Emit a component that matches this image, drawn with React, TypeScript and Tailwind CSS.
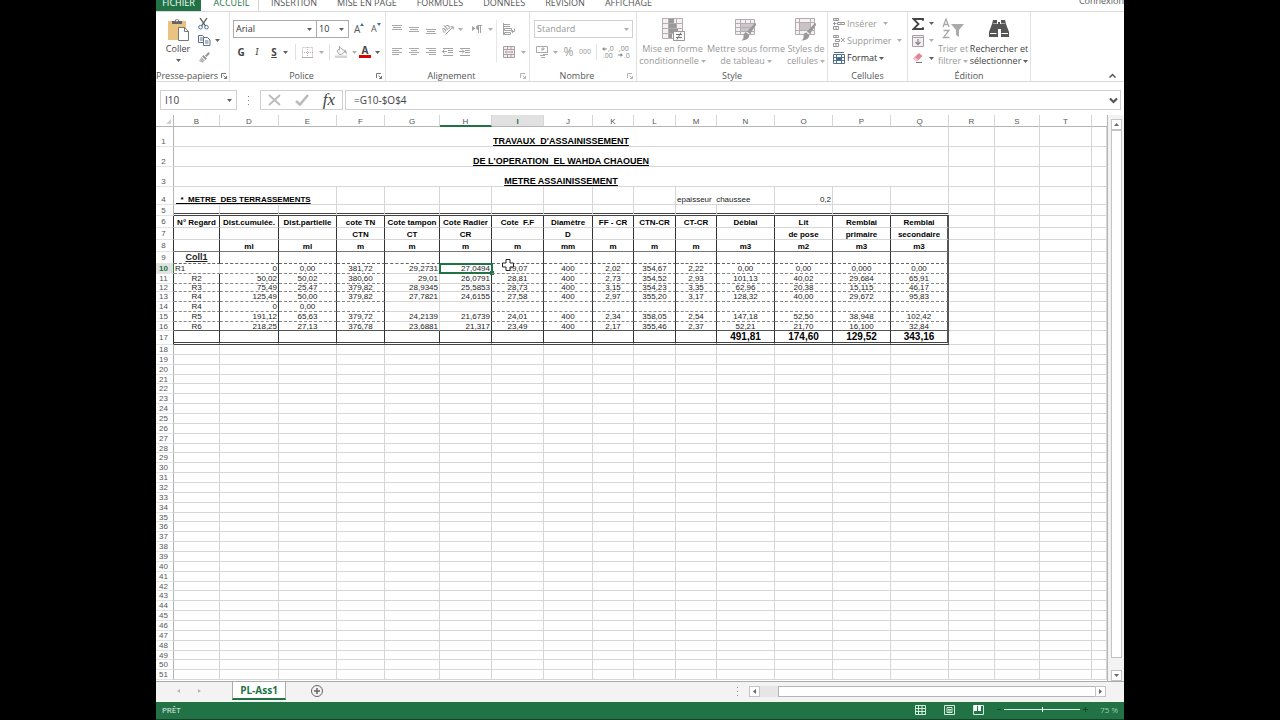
import React from 'react';
import clsx from 'clsx';

const TABS = ['INSERTION', 'MISE EN PAGE', 'FORMULES', 'DONNÉES', 'RÉVISION', 'AFFICHAGE'];

const COLUMNS = [
  { id: 'B', width: 'w-[46px]' },
  { id: 'D', width: 'w-[59px]' },
  { id: 'E', width: 'w-[58px]' },
  { id: 'F', width: 'w-[48px]' },
  { id: 'G', width: 'w-[55px]' },
  { id: 'H', width: 'w-[52px]' },
  { id: 'I', width: 'w-[52px]' },
  { id: 'J', width: 'w-[49px]' },
  { id: 'K', width: 'w-[41px]' },
  { id: 'L', width: 'w-[42px]' },
  { id: 'M', width: 'w-[41px]' },
  { id: 'N', width: 'w-[58px]' },
  { id: 'O', width: 'w-[58px]' },
  { id: 'P', width: 'w-[58px]' },
  { id: 'Q', width: 'w-[58px]' },
  { id: 'R', width: 'w-[46px]' },
  { id: 'S', width: 'w-[45px]' },
  { id: 'T', width: 'w-[52px]' },
];

const TITLES = ["TRAVAUX  D'ASSAINISSEMENT", "DE L'OPERATION  EL WAHDA CHAOUEN", 'METRE ASSAINISSEMENT'];

const HEADINGS = [
  ['N° Regard', 'Dist.cumulée.', 'Dist.partielle', 'cote TN', 'Cote tampon', 'Cote Radier', 'Cote  F.F', 'Diamètre', 'FF - CR', 'CTN-CR', 'CT-CR', 'Déblai', 'Lit', 'Remblai', 'Remblai'],
  ['', '', '', 'CTN', 'CT', 'CR', '', 'D', '', '', '', '', 'de pose', 'primaire', 'secondaire'],
  ['', 'ml', 'ml', 'm', 'm', 'm', 'm', 'mm', 'm', 'm', 'm', 'm3', 'm2', 'm3', 'm3'],
];

const DATA = [
  { n: 10, h: 'h-[10px]', cells: ['R1', '0', '0,00', '381,72', '29,2731', '27,0494', '29,07', '400', '2,02', '354,67', '2,22', '0,00', '0,00', '0,000', '0,00'] },
  { n: 11, h: 'h-[10px]', cells: ['R2', '50,02', '50,02', '380,60', '29,01', '26,0791', '28,81', '400', '2,73', '354,52', '2,93', '101,13', '40,02', '29,684', '65,91'] },
  { n: 12, h: 'h-[8px]', cells: ['R3', '75,49', '25,47', '379,82', '28,9345', '25,5853', '28,73', '400', '3,15', '354,23', '3,35', '62,96', '20,38', '15,115', '46,17'] },
  { n: 13, h: 'h-[10px]', cells: ['R4', '125,49', '50,00', '379,82', '27,7821', '24,6155', '27,58', '400', '2,97', '355,20', '3,17', '128,32', '40,00', '29,672', '95,83'] },
  { n: 14, h: 'h-[10px]', cells: ['R4', '0', '0,00', '', '', '', '', '', '', '', '', '', '', '', ''] },
  { n: 15, h: 'h-[10px]', cells: ['R5', '191,12', '65,63', '379,72', '24,2139', '21,6739', '24,01', '400', '2,34', '358,05', '2,54', '147,18', '52,50', '38,948', '102,42'] },
  { n: 16, h: 'h-[9px]', cells: ['R6', '218,25', '27,13', '376,78', '23,6881', '21,317', '23,49', '400', '2,17', '355,46', '2,37', '52,21', '21,70', '16,100', '32,84'] },
];

const TOTALS = ['', '', '', '', '', '', '', '', '', '', '', '491,81', '174,60', '129,52', '343,16'];

const EMPTY_ROWS = Array.from({ length: 34 }, (_, i) => i + 18);

function Caret({ dim = false }: { dim?: boolean }) {
  return (
    <svg viewBox="0 0 5 3" className={clsx('h-[3px] w-[5px] shrink-0', dim ? 'fill-[#b0b0b0]' : 'fill-[#606060]')}>
      <path d="M0 0h5L2.5 3z" />
    </svg>
  );
}

function Separator({ className }: { className?: string }) {
  return <span className={clsx('w-px shrink-0 bg-[#e1e1e1]', className)} />;
}

function Launcher({ dim = false }: { dim?: boolean }) {
  return (
    <button aria-label="Lanceur" className="flex w-3 shrink-0 items-center justify-center">
      <svg viewBox="0 0 6 6" className={clsx('h-[6px] w-[6px] fill-none', dim ? 'stroke-[#b5b5b5]' : 'stroke-[#777]')}>
        <path d="M.5 5V.5H5M2.5 2.5l3 3M5.5 3v2.5H3" />
      </svg>
    </button>
  );
}

type GroupProps = { title: string; width: string; launcher?: 'on' | 'dim'; children: React.ReactNode };

function Group({ title, width, launcher, children }: GroupProps) {
  return (
    <section className={clsx('flex shrink-0 flex-col', width)}>
      <div className="flex h-[69px] border-r border-[#e1e1e1]">
        <div className="flex min-w-0 flex-1 flex-col">
          <div className="h-[58px]">{children}</div>
          <div className="flex h-[11px] items-center">
            <h2 className="flex-1 whitespace-nowrap text-center text-[9px] leading-[11px] text-[#555]">{title}</h2>
            {launcher && <Launcher dim={launcher === 'dim'} />}
          </div>
        </div>
      </div>
    </section>
  );
}

function Lines({ rows }: { rows: [number, number, number][] }) {
  return (
    <svg viewBox="0 0 12 10" className="h-[10px] w-3 stroke-[#a9a9a9]">
      {rows.map(([x, y, w]) => (
        <path key={y} d={`M${x} ${y}.5h${w}`} />
      ))}
    </svg>
  );
}

function Clipboard() {
  return (
    <div className="flex h-full pt-[3px]">
      <button className="flex w-[42px] flex-col items-center pl-[2px] pt-[3px] text-[9px] leading-3 text-[#444]">
        <svg viewBox="0 0 23 24" className="h-6 w-[23px]">
          <path fill="#eac282" d="M1 3h18v19H1z" />
          <path fill="#666" d="M5 3h3a2 2 0 0 1 4 0h3v3H5z" />
          <circle cx="10" cy="2.5" r="1" fill="#fff" />
          <path fill="#fff" stroke="#777" d="M11.500 9.500h6l4 4v9h-10z" />
          <path fill="none" stroke="#777" d="M17.500 9.500v4h4" />
        </svg>
        <span className="pt-px">Coller</span>
        <span className="pt-1"><Caret /></span>
      </button>
      <div className="flex flex-col">
        <button aria-label="Couper" className="flex h-[17px] items-center">
          <svg viewBox="0 0 12 12" className="h-3 w-3 fill-none">
            <path stroke="#555" strokeWidth="1.300" d="M2 0l5.500 8M9 0L3.500 8" />
            <circle cx="2.500" cy="9.200" r="1.800" stroke="#41719c" />
            <circle cx="8.500" cy="9.200" r="1.800" stroke="#41719c" />
          </svg>
        </button>
        <button aria-label="Copier" className="flex h-[17px] items-center gap-1">
          <svg viewBox="0 0 13 11" className="h-[11px] w-[13px] fill-white stroke-[#5d7186]">
            <path d="M.5.5h4l2 2v5h-6zM1.800 3h3M1.800 5h3" />
            <path d="M5.500 2.500h4l2.500 2.500v5.500H5.500zM7 6h3.500M7 8h3.500" />
          </svg>
          <Caret />
        </button>
        <button aria-label="Reproduire la mise en forme" className="flex h-[17px] items-center">
          <svg viewBox="0 0 12 11" className="h-[11px] w-3">
            <path fill="#999" d="M10.500 0L12 1.500 8.500 5 7 3.500zM5.500 3L9 6.500 7.500 8 4 4.500z" />
            <path fill="#bbb" d="M3.500 5l3.500 3.500L4.500 11 1 9z" />
          </svg>
        </button>
      </div>
    </div>
  );
}

function FontGroup() {
  return (
    <div className="flex h-full flex-col gap-[6px] pl-[3px] pt-2">
      <div className="flex h-[18px] items-center">
        <label className="flex h-full w-[84px] items-center border border-[#ababab] bg-white pr-1">
          <select aria-label="Police" className="min-w-0 flex-1 appearance-none pl-[2px] text-[9px] leading-3 text-[#333] outline-none">
            <option>Arial</option>
          </select>
          <Caret />
        </label>
        <label className="flex h-full w-8 items-center border border-l-0 border-[#ababab] bg-white pr-1">
          <select aria-label="Taille" className="min-w-0 flex-1 appearance-none pl-[2px] text-[9px] leading-3 text-[#333] outline-none">
            <option>10</option>
          </select>
          <Caret />
        </label>
        <button aria-label="Augmenter la taille" className="ml-[5px] flex w-3 items-start text-[10px] leading-3 text-[#555]">
          A<svg viewBox="0 0 4 3" className="h-[3px] w-1 fill-[#41719c]"><path d="M0 3h4L2 0z" /></svg>
        </button>
        <button aria-label="Réduire la taille" className="ml-[5px] flex w-3 items-start text-[9px] leading-3 text-[#555]">
          A<svg viewBox="0 0 4 3" className="h-[3px] w-1 fill-[#41719c]"><path d="M0 0h4L2 3z" /></svg>
        </button>
      </div>
      <div className="flex h-4 items-center text-[10px] text-[#444]">
        <button className="w-4 font-bold">G</button>
        <button className="w-4 font-serif italic">I</button>
        <button className="w-[18px] font-bold underline">S</button>
        <Caret />
        <Separator className="ml-[7px] h-4" />
        <button aria-label="Bordures" className="ml-[6px] flex items-center gap-[6px]">
          <svg viewBox="0 0 11 11" className="h-[11px] w-[11px] fill-none stroke-[#b9aeb4]">
            <path strokeDasharray="1 1" d="M.5.5h10v10H.5zM5.500 0v11M0 5.500h11" />
            <path d="M0 10.500h11" />
          </svg>
          <Caret dim />
        </button>
        <Separator className="ml-[5px] h-4" />
        <button aria-label="Couleur de remplissage" className="ml-[5px] flex items-center gap-[5px]">
          <svg viewBox="0 0 12 12" className="h-3 w-3">
            <path fill="#f4f4f4" stroke="#a8a8a8" d="M2 5l3.500-3.500L10 5.500 6.500 8.500 4.500 8.500z" />
            <path fill="#a8a8a8" d="M9.500 3.500q3 1 2 5-1-2-2-2.500zM4 0h1v4H4z" />
            <path fill="#d6d2d2" d="M0 9.500h12V12H0z" />
          </svg>
          <Caret dim />
        </button>
        <button aria-label="Couleur de police" className="ml-[2px] flex items-center gap-1">
          <span className="flex h-3 w-3 items-center justify-center border-b-[3px] border-[#e00000] text-[10px] font-bold leading-[9px]">A</span>
          <Caret />
        </button>
      </div>
    </div>
  );
}

function AlignGroup() {
  return (
    <div className="flex h-full pt-2">
      <div className="flex h-[42px] w-[111px] flex-col gap-[6px] border-r border-[#e6e6e6] pl-[5px]">
        <div className="flex h-[18px] items-center gap-[5px]">
          <button aria-label="Aligner en haut"><Lines rows={[[1, 1, 10], [2, 3, 8], [1, 5, 10]]} /></button>
          <button aria-label="Aligner au centre"><Lines rows={[[1, 3, 10], [2, 5, 8], [1, 7, 10]]} /></button>
          <button aria-label="Aligner en bas"><Lines rows={[[1, 5, 10], [2, 7, 8], [1, 9, 10]]} /></button>
          <button aria-label="Orientation" className="flex items-center gap-1">
            <svg viewBox="0 0 12 12" className="h-3 w-3 fill-none stroke-[#999]">
              <text x="0" y="8" fontSize="8" stroke="none" fill="#888" transform="rotate(-40 4 7)">ab</text>
              <path d="M3.500 11.500L11 4M8.500 3.800H11.200V6.500" />
            </svg>
            <Caret dim />
          </button>
          <button aria-label="Sens du texte" className="ml-1 flex items-center gap-[6px]">
            <svg viewBox="0 0 10 8" className="h-2 w-[10px] fill-[#a3a3a3]">
              <path d="M0 1l3.500 2.500L0 6zM5 0h5v1H9v7H8V1H7v7H6V5Q4 4.500 4 2.500T6 0z" />
            </svg>
            <Caret dim />
          </button>
        </div>
        <div className="flex h-4 items-center gap-[5px]">
          <button aria-label="Aligner à gauche"><Lines rows={[[1, 1, 10], [1, 3, 7], [1, 5, 10], [1, 7, 7]]} /></button>
          <button aria-label="Centrer"><Lines rows={[[1, 1, 10], [3, 3, 6], [1, 5, 10], [3, 7, 6]]} /></button>
          <button aria-label="Aligner à droite"><Lines rows={[[1, 1, 10], [4, 3, 7], [1, 5, 10], [4, 7, 7]]} /></button>
          <button aria-label="Diminuer le retrait">
            <svg viewBox="0 0 12 10" className="h-[10px] w-3 fill-none stroke-[#a3a3a3]">
              <path d="M1 1.500h10M6 3.500h5M6 5.500h5M1 8.500h10M0 4.500h5M2.500 2.500l-2 2 2 2" />
            </svg>
          </button>
          <button aria-label="Augmenter le retrait">
            <svg viewBox="0 0 12 10" className="h-[10px] w-3 fill-none stroke-[#a3a3a3]">
              <path d="M1 1.500h10M6 3.500h5M6 5.500h5M1 8.500h10M0 4.500h5M3 2.500l2 2-2 2" />
            </svg>
          </button>
        </div>
      </div>
      <div className="flex flex-col gap-[6px] pl-[6px]">
        <button aria-label="Renvoyer à la ligne" className="flex h-[18px] items-center">
          <svg viewBox="0 0 12 12" className="h-3 w-3 fill-none stroke-[#a3a3a3]">
            <path d="M.5 0v12M1 1.500h6M1 3.500h6M1.500 5.500h7v2h-7zM1.500 9.500h6v2h-6zM9 8.500h2.500v-3M10 7L8.500 8.500 10 10" />
          </svg>
        </button>
        <button aria-label="Fusionner et centrer" className="flex h-4 items-center gap-[6px]">
          <svg viewBox="0 0 12 12" className="h-3 w-3 fill-[#f3edf0] stroke-[#a99fa4]">
            <path d="M.5.5h11v11H.5zM.5 3.500h11M.5 8.500h11M4.500.5v3M8 .5v3M4.500 8.500v3M8 8.500v3" />
            <path d="M2 6h8M3.500 4.800L2.300 6l1.200 1.200M8.500 4.800L9.700 6 8.500 7.200" />
          </svg>
          <Caret dim />
        </button>
      </div>
    </div>
  );
}

function NumberGroup() {
  return (
    <div className="flex h-full flex-col gap-[6px] pl-1 pr-[3px] pt-2">
      <label className="flex h-[18px] items-center border border-[#d0d0d0] bg-white pr-[3px]">
        <select aria-label="Format de nombre" className="min-w-0 flex-1 appearance-none pl-[2px] text-[9px] leading-3 text-[#999] outline-none">
          <option>Standard</option>
        </select>
        <Caret dim />
      </label>
      <div className="flex h-4 items-center text-[#999]">
        <button aria-label="Format comptabilité" className="ml-[2px] flex items-center gap-1">
          <svg viewBox="0 0 13 12" className="h-3 w-[13px] fill-none stroke-[#aaa]">
            <path d="M.5.5h11v6H.5zM6 2v3M6 2h2v1.500H6" />
            <path fill="#ddd" d="M7 8.500h5M7 6.500h5M4 9.500h5M5 11.500h4" />
          </svg>
          <Caret dim />
        </button>
        <button className="ml-[5px] w-[11px] text-[12px] leading-4">%</button>
        <button className="ml-1 w-[14px] text-[7px] leading-4">000</button>
        <Separator className="ml-1 h-4" />
        <button aria-label="Ajouter une décimale" className="ml-[5px]">
          <svg viewBox="0 0 12 12" className="h-3 w-3 fill-[#888]">
            <text x="6" y="5" fontSize="7">,0</text>
            <text x="1" y="12" fontSize="7">,00</text>
            <path d="M0 3l2.500-2v1.500H5v1H2.500V5z" />
          </svg>
        </button>
        <button aria-label="Réduire les décimales" className="ml-1">
          <svg viewBox="0 0 12 12" className="h-3 w-3 fill-[#888]">
            <text x="1" y="5" fontSize="7">,00</text>
            <text x="6" y="12" fontSize="7">,0</text>
            <path d="M5 9L2.500 7v1.500H0v1h2.500V11z" />
          </svg>
        </button>
      </div>
    </div>
  );
}

type BigButtonProps = { width: string; lines: [string, string]; dim?: boolean; children: React.ReactNode };

function BigButton({ width, lines, dim, children }: BigButtonProps) {
  return (
    <button className={clsx('flex shrink-0 flex-col items-center whitespace-nowrap text-[9px] leading-3', width, dim ? 'text-[#999]' : 'text-[#444]')}>
      <span className="flex h-[25px] items-start">{children}</span>
      <span>{lines[0]}</span>
      <span className="flex items-center gap-[2px]">{lines[1]}<Caret dim={dim} /></span>
    </button>
  );
}

function Brush() {
  return (
    <>
      <path fill="#999" d="M21 5q1.500 0 1 2l-6 9-3-2.500z" />
      <path fill="#999" d="M12.500 14.500l3 3q-1 5-8.500 5 3-1.500 2.500-4.500t3-3.500z" />
    </>
  );
}

function StyleGroup() {
  return (
    <div className="flex h-full pl-[2px] pt-[6px]">
      <BigButton width="w-[67px]" lines={['Mise en forme', 'conditionnelle']} dim>
        <svg viewBox="0 0 24 24" className="h-6 w-6">
          <path fill="#f5f1f3" stroke="#b5adb1" d="M1.500.5h20v20h-20zM1.500 5.500h20M1.500 10.500h20M1.500 15.500h20M7.500.5v20M15.500.5v20" />
          <path fill="#999" d="M8 1h5v4H8zM8 6h7v4H8zM8 11h9v4H8zM8 16h3v4H8z" />
          <path fill="#fbf9fa" stroke="#999" d="M12.500 13.500h11v9h-11z" />
          <path stroke="#777" d="M15 16.500h6M15 19.500h6M20 14.500l-4 7" />
        </svg>
      </BigButton>
      <BigButton width="w-[80px]" lines={['Mettre sous forme', 'de tableau']} dim>
        <svg viewBox="0 0 24 24" className="h-6 w-6">
          <path fill="#f3eff1" stroke="#b5adb1" d="M1.500 1.500h19v15h-19zM1.500 5.500h19M1.500 9.500h19M1.500 13.500h19M6.500 1.500v15M11.500 1.500v15M16.500 1.500v15" />
          <path fill="#ccc5c9" d="M7 6h13v3H7zM7 10h9v3H7z" />
          <Brush />
        </svg>
      </BigButton>
      <BigButton width="w-[40px]" lines={['Styles de', 'cellules']} dim>
        <svg viewBox="0 0 24 24" className="h-6 w-6">
          <path fill="#f5f1f3" stroke="#b5adb1" d="M1.500.5h19v16h-19zM1.500 4.500h19M1.500 12.500h19M5.500.5v16M16.500.5v16" />
          <path fill="#c9c3c6" d="M6 5h10v7H6z" />
          <Brush />
        </svg>
      </BigButton>
    </div>
  );
}

function CellsGroup() {
  return (
    <div className="flex h-full flex-col pl-[5px] pt-[3px] text-[9px] leading-3 text-[#999]">
      <button className="flex h-[17px] items-center gap-[2px]">
        <svg viewBox="0 0 12 12" className="h-3 w-3 fill-white stroke-[#999]">
          <path d="M.5.5h5v2h-5zM.5 8.500h5v3h-5zM3 .5v2M3 8.500v3M4.500 4.500h7v2h-7zM8 4.500v2M3.500 5.500H0M2 4L.5 5.500 2 7" />
        </svg>
        Insérer
        <span className="pl-1"><Caret dim /></span>
      </button>
      <button className="flex h-[17px] items-center gap-[2px]">
        <svg viewBox="0 0 12 12" className="h-3 w-3 fill-white stroke-[#999]">
          <path d="M.5.500h5v2h-5zM.5 8.500h5v3h-5zM3 .5v2M3 8.500v3M2.500 4.500h4v2h-4zM8 3l3.500 4M11.500 3L8 7" />
        </svg>
        Supprimer
        <span className="pl-1"><Caret dim /></span>
      </button>
      <button className="flex h-[18px] items-center gap-[2px] text-[#333]">
        <svg viewBox="0 0 12 12" className="h-3 w-3 fill-white stroke-[#54708c]">
          <path d="M.5 2.500h11v9H.5zM.5 5.500h11M.5 8.500h11M3.500 2.500v9M8.500 2.500v9M1 .5h10" />
          <path fill="#2b6aa8" d="M4 5.500h4v3H4z" />
        </svg>
        Format
        <Caret />
      </button>
    </div>
  );
}

function EditGroup() {
  return (
    <div className="flex h-full pl-1">
      <div className="flex w-[25px] flex-col pt-[3px]">
        <button aria-label="Somme" className="flex h-[17px] items-center gap-[5px]">
          <svg viewBox="0 0 12 12" className="h-3 w-3 fill-none stroke-[#444]">
            <path strokeWidth="1.800" d="M11 2.800V1H1.500l5 5-5 5H11V9.200" />
          </svg>
          <Caret />
        </button>
        <button aria-label="Remplissage" className="flex h-[17px] items-center gap-[5px]">
          <svg viewBox="0 0 12 12" className="h-3 w-3 fill-[#f3eff1] stroke-[#a99fa6]">
            <path d="M.5.500h11v11H.5zM.5 2.500h11" />
            <path stroke="#888" strokeWidth="1.300" fill="none" d="M6 4v5M3.500 7L6 9.500 8.500 7" />
          </svg>
          <Caret dim />
        </button>
        <button aria-label="Effacer" className="flex h-[18px] items-center gap-[5px]">
          <svg viewBox="0 0 12 10" className="h-[10px] w-3">
            <path fill="#e0859a" d="M7 0l3.500 3L5 8.500 1 5.500z" />
            <path fill="#f4c3cd" d="M3 4l3.500 3L5 8.500 1 5.500z" />
            <path stroke="#777" d="M4 9.500h6" />
          </svg>
          <Caret />
        </button>
      </div>
      <div className="flex pt-[6px]">
        <BigButton width="w-8" lines={['Trier et', 'filtrer']} dim>
          <svg viewBox="0 0 22 22" className="h-[22px] w-[22px] fill-none stroke-[#a9a9a9]">
            <path strokeWidth="1.300" d="M1 9l3-8 3 8M2 6.500h4M1.500 12.500h5.500l-5.500 7h6" />
            <path fill="#aaa" stroke="none" d="M9 6h13l-5 6v7l-3-2v-5z" />
          </svg>
        </BigButton>
        <BigButton width="w-[60px]" lines={['Rechercher et', 'sélectionner']}>
          <svg viewBox="0 0 20 20" className="h-5 w-5 fill-[#555]">
            <path d="M4 2h4v4h1V4h2v2h1V2h4l1 4 3 8v5h-8v-8H9v8H0v-5l3-8z" />
            <path fill="#fff" d="M1 15h6.500v1H1zM12.500 15H19v1h-6.500zM4 5h4v.6H4zM12 5h4v.6h-4zM5 0h2v1H5zM13 0h2v1h-2z" />
          </svg>
        </BigButton>
      </div>
    </div>
  );
}

function Ribbon() {
  return (
    <header className="font-['Open_Sans',sans-serif]">
      <nav className="flex h-[11px] items-start whitespace-nowrap text-[9px] leading-[6px] text-[#555]">
        <a href="#fichier" className="flex h-full w-[45px] justify-center bg-[#217346] text-white">FICHIER</a>
        <a href="#accueil" className="ml-1 flex h-full w-[54px] justify-center border-r border-[#d4d4d4] text-[#217346]">ACCUEIL</a>
        <div className="flex flex-1 gap-5 pl-3">
          {TABS.map((tab) => (
            <a key={tab} href={'#' + tab}>{tab}</a>
          ))}
        </div>
        <a href="#connexion" className="leading-[2px]">Connexion</a>
      </nav>
      <div className="flex border-y border-[#d9d9d9]">
        <Group title="Presse-papiers" width="w-[74px]" launcher="on"><Clipboard /></Group>
        <Group title="Police" width="w-[156px]" launcher="on"><FontGroup /></Group>
        <Group title="Alignement" width="w-[144px]" launcher="dim"><AlignGroup /></Group>
        <Group title="Nombre" width="w-[107px]" launcher="dim"><NumberGroup /></Group>
        <Group title="Style" width="w-[191px]"><StyleGroup /></Group>
        <Group title="Cellules" width="w-[80px]"><CellsGroup /></Group>
        <Group title="Édition" width="w-[123px]"><EditGroup /></Group>
        <button aria-label="Réduire le ruban" className="ml-auto flex items-end px-2 pb-[3px]">
          <svg viewBox="0 0 7 5" className="h-[5px] w-[7px] fill-none stroke-[#555]">
            <path strokeWidth="1.500" d="M.5 4.500l3-3 3 3" />
          </svg>
        </button>
      </div>
    </header>
  );
}

function FormulaBar() {
  return (
    <div className="flex h-[33px] items-center pb-[3px] pl-1 pr-[3px] pt-[6px] font-['Open_Sans',sans-serif] text-[10px] text-[#444]">
      <label className="flex h-5 w-[77px] items-center border border-[#cfcfcf] pr-1">
        <input aria-label="Zone Nom" defaultValue="I10" className="min-w-0 flex-1 pl-1 outline-none" />
        <Caret />
      </label>
      <span className="flex w-[23px] flex-col items-center gap-[3px]">
        <i className="h-px w-px bg-[#888]" />
        <i className="h-px w-px bg-[#888]" />
        <i className="h-px w-px bg-[#888]" />
      </span>
      <div className="flex h-5 w-[83px] items-center justify-around border border-[#cfcfcf]">
        <button aria-label="Annuler">
          <svg viewBox="0 0 13 12" className="h-3 w-[13px] stroke-[#bbb]"><path strokeWidth="1.800" d="M1 1l11 10M12 1L1 11" /></svg>
        </button>
        <button aria-label="Entrer">
          <svg viewBox="0 0 14 12" className="h-3 w-[14px] fill-none stroke-[#bbb]"><path strokeWidth="2.600" d="M1 7l4 3.500L13 1" /></svg>
        </button>
        <button aria-label="Insérer une fonction" className="font-['Liberation_Serif',serif] text-[17px] italic leading-4 text-[#444]">fx</button>
      </div>
      <label className="ml-[2px] flex h-5 flex-1 items-center border border-[#cfcfcf] pr-[2px]">
        <input aria-label="Barre de formule" defaultValue="=G10-$O$4" className="min-w-0 flex-1 pl-2 outline-none" />
        <svg viewBox="0 0 9 7" className="h-[7px] w-[9px] fill-none stroke-[#555]"><path strokeWidth="2.200" d="M1 1.500L4.500 5 8 1.500" /></svg>
      </label>
    </div>
  );
}

function RowHead({ n, active = false, framed = false }: { n: number; active?: boolean; framed?: boolean }) {
  return (
    <th
      className={clsx(
        'border-b border-r p-0 pr-[2px] text-center border-b-[#e3e3e3]',
        n < 5 ? 'pb-px align-bottom' : 'align-middle',
        active ? 'bg-[#e1e1e1] font-bold text-[#217346]' : 'font-normal text-[#555]',
        active ? 'border-r-[#217346]' : framed ? 'border-r-[#333]' : 'border-r-[#b5b5b5]',
      )}
    >
      {n}
    </th>
  );
}

function Blanks({ count }: { count: number }) {
  return (
    <>
      {Array.from({ length: count }, (_, i) => (
        <td key={i} className="border-b border-r border-[#d6d6d6] p-0" />
      ))}
    </>
  );
}

function CrossCursor() {
  return (
    <svg viewBox="0 0 12 12" className="absolute -top-[5px] left-[10px] h-3 w-3 fill-white stroke-[#222]">
      <path d="M4 .5h4V4h3.500v4H8v3.500H4V8H.5V4H4z" />
    </svg>
  );
}

function Sheet() {
  return (
    <table className="w-full table-fixed border-separate border-spacing-0 font-['Liberation_Sans',Arial,sans-serif] text-[8px] leading-[7px] text-[#222]">
      <colgroup>
        <col className="w-[18px]" />
        {COLUMNS.map((c) => (
          <col key={c.id} className={c.width} />
        ))}
        <col />
      </colgroup>
      <thead>
        <tr className="h-3">
          <th className="border-b border-r border-[#b5b5b5] p-0 pb-[2px] pr-[2px] align-bottom">
            <svg viewBox="0 0 5 5" className="ml-auto h-[5px] w-[5px] fill-[#d0d0d0]"><path d="M5 0v5H0z" /></svg>
          </th>
          {COLUMNS.map((c) => (
            <th
              key={c.id}
              className={clsx(
                'border-r border-r-[#d6d6d6] p-0 pt-[2px]',
                c.id === 'H' ? 'border-b-2 border-b-[#217346]' : 'border-b border-b-[#b5b5b5]',
                c.id === 'I' ? 'bg-[#e1e1e1] font-bold text-[#217346]' : 'font-normal text-[#555]',
              )}
            >
              {c.id}
            </th>
          ))}
          <th className="border-b border-b-[#b5b5b5] p-0" />
        </tr>
      </thead>
      <tbody>
        {TITLES.map((title, i) => (
          <tr key={title} className="h-5">
            <RowHead n={i + 1} />
            <td colSpan={15} className="whitespace-pre border-b border-r border-[#d6d6d6] p-0 text-center align-bottom text-[9px] font-bold leading-[9px] text-black underline">
              {title}
            </td>
            <Blanks count={4} />
          </tr>
        ))}
        <tr className="h-[18px]">
          <RowHead n={4} />
          <td colSpan={3} className="whitespace-pre border-b border-r border-[#d6d6d6] p-0 pl-[2px] align-bottom font-bold leading-[9px] text-black underline">
            {'  *  METRE  DES TERRASSEMENTS'}
          </td>
          <Blanks count={7} />
          <td colSpan={2} className="whitespace-pre border-b border-r border-[#d6d6d6] p-0 pl-px align-bottom leading-[9px]">epaisseur  chaussee</td>
          <td className="border-b border-r border-[#d6d6d6] p-0 pr-px text-right align-bottom leading-[9px]">0,2</td>
          <Blanks count={6} />
        </tr>
        <tr className="h-[11px]">
          <RowHead n={5} />
          {COLUMNS.slice(0, 15).map((c) => (
            <td key={c.id} className="border-b-[3px] border-r border-double border-b-[#444] border-r-[#d6d6d6] p-0" />
          ))}
          <Blanks count={4} />
        </tr>
        {HEADINGS.map((row, r) => (
          <tr key={r} className="h-3">
            <RowHead n={r + 6} framed />
            {row.map((text, i) => (
              <td
                key={i}
                className={clsx(
                  'whitespace-pre border-b p-0 pt-[2px] text-center font-bold text-black',
                  r === 2 ? 'border-b-[#777]' : 'border-b-[#d6d6d6]',
                  i === 14 ? 'border-r-2 border-r-[#555]' : 'border-r border-r-[#333]',
                )}
              >
                {text}
              </td>
            ))}
            <Blanks count={4} />
          </tr>
        ))}
        <tr className="h-3">
          <RowHead n={9} framed />
          {COLUMNS.slice(0, 15).map((c, i) => (
            <td
              key={c.id}
              className={clsx(
                'border-b p-0 text-center text-[9px] font-bold leading-[9px] underline [border-bottom-style:dashed] border-b-[#666]',
                i === 14 ? 'border-r-2 border-r-[#555]' : 'border-r border-r-[#333]',
              )}
            >
              {i === 0 && 'Coll1'}
            </td>
          ))}
          <Blanks count={4} />
        </tr>
        {DATA.map((row) => (
          <tr key={row.n} className={row.h}>
            <RowHead n={row.n} active={row.n === 10} framed />
            {row.cells.map((text, i) => (
              <td
                key={i}
                className={clsx(
                  'border-b p-0',
                  i === 1 || i === 4 || i === 5 ? 'pr-px text-right' : i === 0 && row.n === 10 ? 'pl-px text-left' : 'text-center',
                  row.n === 16 ? 'border-b-[#555]' : i === 4 || i === 5 ? 'border-b-[#d6d6d6]' : 'border-b-[#888] [border-bottom-style:dashed]',
                  i === 14 ? 'border-r-2 border-r-[#555]' : 'border-r',
                  i === 4 || (i === 0 && row.n === 10) ? 'border-r-[#d6d6d6]' : 'border-r-[#333]',
                  row.n === 10 && (i === 5 || i === 6) && 'relative',
                )}
              >
                {text}
                {row.n === 10 && i === 5 && (
                  <span className="absolute -bottom-px -left-px -right-[2px] -top-px border-2 border-[#217346]">
                    <i className="absolute -bottom-[3px] -right-[3px] h-1 w-1 bg-[#217346]" />
                  </span>
                )}
                {row.n === 10 && i === 6 && <CrossCursor />}
              </td>
            ))}
            <Blanks count={4} />
          </tr>
        ))}
        <tr className="h-[14px]">
          <RowHead n={17} framed />
          {TOTALS.map((text, i) => (
            <td
              key={i}
              className={clsx(
                'border-b-[3px] border-double border-b-[#444] p-0 text-center text-[10px] font-bold leading-[10px] text-black',
                i === 14 ? 'border-r-2 border-r-[#555]' : 'border-r border-r-[#333]',
              )}
            >
              {text}
            </td>
          ))}
          <Blanks count={4} />
        </tr>
        {EMPTY_ROWS.map((n) => (
          <tr key={n} className={n % 7 === 0 ? 'h-[9px]' : 'h-[10px]'}>
            <RowHead n={n} />
            <Blanks count={19} />
          </tr>
        ))}
      </tbody>
    </table>
  );
}

function ScrollButton({ label, d }: { label: string; d: string }) {
  return (
    <button aria-label={label} className="flex h-[11px] w-[11px] shrink-0 items-center justify-center border border-[#c4c4c4] bg-white">
      <svg viewBox="0 0 5 5" className="h-[5px] w-[5px] fill-[#666]"><path d={d} /></svg>
    </button>
  );
}

function SheetBar() {
  return (
    <div className="flex h-[21px] shrink-0 border-t border-[#ababab] bg-[#f3f3f3] pb-[2px] font-['Open_Sans',sans-serif]">
      <div className="flex w-[76px] items-center gap-[18px] pl-[21px]">
        <svg viewBox="0 0 3 4" className="h-1 w-[3px] fill-[#b5b5b5]"><path d="M3 0v4L0 2z" /></svg>
        <svg viewBox="0 0 3 4" className="h-1 w-[3px] fill-[#b5b5b5]"><path d="M0 0v4l3-2z" /></svg>
      </div>
      <button className="flex h-[18px] w-[54px] items-center justify-center border-x border-b-2 border-x-[#ababab] border-b-[#217346] bg-white text-[10px] font-bold text-[#217346]">
        PL-Ass1
      </button>
      <button aria-label="Nouvelle feuille" className="ml-[25px]">
        <svg viewBox="0 0 12 12" className="h-3 w-3 fill-none stroke-[#666]">
          <circle cx="6" cy="6" r="5.500" />
          <path strokeWidth="1.500" d="M3 6h6M6 3v6" />
        </svg>
      </button>
      <div className="ml-auto flex items-center pr-[18px]">
        <span className="flex w-3 flex-col gap-[3px]">
          <i className="h-px w-px bg-[#888]" />
          <i className="h-px w-px bg-[#888]" />
          <i className="h-px w-px bg-[#888]" />
        </span>
        <ScrollButton label="Défiler à gauche" d="M4 0v5L1 2.500z" />
        <span className="h-[11px] w-[18px] bg-[#e6e6e6]" />
        <span className="h-[11px] w-[317px] border border-r-0 border-[#b5b5b5] bg-white" />
        <ScrollButton label="Défiler à droite" d="M1 0v5l3-2.500z" />
      </div>
    </div>
  );
}

function StatusBar() {
  return (
    <footer className="flex h-[18px] shrink-0 items-center border-b border-[#17402a] bg-[#217346] px-[6px] pb-[2px] font-['Open_Sans',sans-serif] text-[8px] text-[#e3f0e8]">
      <span>PRÊT</span>
      <div className="ml-auto flex items-center gap-[18px]">
        <button aria-label="Normal">
          <svg viewBox="0 0 11 10" className="h-[10px] w-[11px] fill-none stroke-[#d4ecdd]"><path d="M.5.500h10v9H.5zM.5 3.500h10M.5 6.500h10M3.500.500v9M7 .5v9" /></svg>
        </button>
        <button aria-label="Mise en page">
          <svg viewBox="0 0 11 10" className="h-[10px] w-[11px] fill-none stroke-[#d4ecdd]"><path d="M.5.500h10v9H.5zM3 2.500h5v5H3zM4 4.500h3M4 6h3" /></svg>
        </button>
        <button aria-label="Aperçu des sauts de page">
          <svg viewBox="0 0 11 10" className="h-[10px] w-[11px] fill-none stroke-[#d4ecdd]"><path d="M.5.500h10v9H.5z" /><path fill="#fff" stroke="none" d="M1 0h3v6H1zM5 0h3v6H5z" /></svg>
        </button>
      </div>
      <button aria-label="Zoom arrière" className="ml-[13px] h-px w-1 bg-[#0e4a28]" />
      <input
        type="range"
        aria-label="Zoom"
        defaultValue={50}
        className="mx-[3px] h-1 w-[76px] appearance-none bg-transparent [&::-webkit-slider-runnable-track]:h-px [&::-webkit-slider-runnable-track]:bg-[#d4ecdd] [&::-webkit-slider-thumb]:-mt-[2px] [&::-webkit-slider-thumb]:h-[5px] [&::-webkit-slider-thumb]:w-px [&::-webkit-slider-thumb]:appearance-none [&::-webkit-slider-thumb]:bg-white"
      />
      <button aria-label="Zoom avant">
        <svg viewBox="0 0 5 5" className="h-[5px] w-[5px] stroke-[#0e4a28]"><path d="M0 2.500h5M2.500 0v5" /></svg>
      </button>
      <span className="ml-3 text-[#9ccbb0]">75 %</span>
    </footer>
  );
}

export default function App() {
  return (
    <div className="h-screen overflow-hidden bg-black px-[156px]">
      <div className="flex h-full flex-col overflow-hidden bg-white">
        <Ribbon />
        <FormulaBar />
        <main className="flex min-h-0 flex-1 overflow-hidden">
          <div className="min-w-0 flex-1"><Sheet /></div>
          <div className="flex w-[17px] shrink-0 flex-col border-l border-[#b5b5b5] bg-[#f3f3f3] pl-[3px] pt-1">
            <ScrollButton label="Défiler vers le haut" d="M0 4h5L2.500 1z" />
            <span className="w-[11px] flex-1 border border-[#c4c4c4] bg-white" />
            <span className="h-3 w-[11px]" />
            <ScrollButton label="Défiler vers le bas" d="M0 1h5L2.500 4z" />
          </div>
        </main>
        <SheetBar />
        <StatusBar />
      </div>
    </div>
  );
}
